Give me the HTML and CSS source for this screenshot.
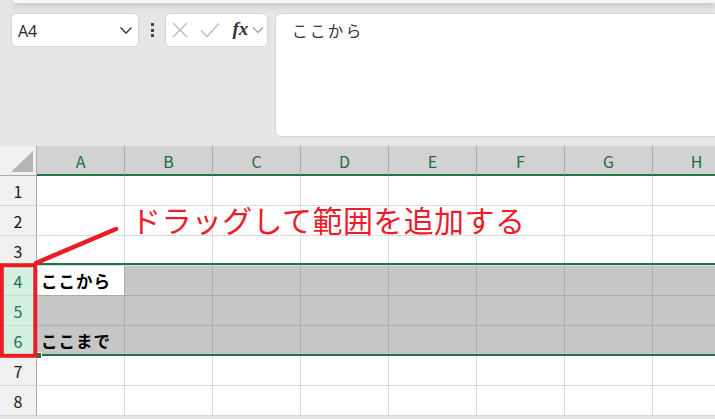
FILE: index.html
```html
<!DOCTYPE html>
<html lang="ja">
<head>
<meta charset="utf-8">
<title>Excel</title>
<link rel="stylesheet" href="styles.css">
</head>
<body>
<div class="page">
  <div class="ribbon-edge"></div>
  <div class="formula-row">
    <div class="namebox">
      <span class="name">A4</span>
      <svg class="chev" width="14" height="9" viewBox="0 0 14 9"><path d="M1.5 1.5 L7 7 L12.5 1.5" fill="none" stroke="#333" stroke-width="1.4"/></svg>
    </div>
    <div class="dots"><i></i><i></i><i></i></div>
    <div class="fbtns">
      <svg width="16" height="16" viewBox="0 0 16 16"><path d="M1 1 L15 15 M15 1 L1 15" stroke="#b8b8b8" stroke-width="1.3"/></svg>
      <svg width="20" height="16" viewBox="0 0 20 16"><path d="M1 8.5 L7 14.5 L19 1.5" fill="none" stroke="#b8b8b8" stroke-width="1.3"/></svg>
      <span class="fx">fx</span>
      <svg class="chev2" width="12" height="8" viewBox="0 0 12 8"><path d="M1 1.5 L6 6.5 L11 1.5" fill="none" stroke="#9a9a9a" stroke-width="1.2"/></svg>
    </div>
    <div class="finput">ここから</div>
  </div>

  <div class="sheet-wrap">
    <div class="sheet">
      <div class="corner"><span class="tri"></span></div>
      <div class="hd">A</div><div class="hd">B</div><div class="hd">C</div><div class="hd">D</div><div class="hd">E</div><div class="hd">F</div><div class="hd">G</div><div class="hd">H</div>

      <div class="rh">1</div><div class="c"></div><div class="c"></div><div class="c"></div><div class="c"></div><div class="c"></div><div class="c"></div><div class="c"></div><div class="c"></div>
      <div class="rh">2</div><div class="c"></div><div class="c"></div><div class="c"></div><div class="c"></div><div class="c"></div><div class="c"></div><div class="c"></div><div class="c"></div>
      <div class="rh">3</div><div class="c"></div><div class="c"></div><div class="c"></div><div class="c"></div><div class="c"></div><div class="c"></div><div class="c"></div><div class="c"></div>

      <div class="rh rsel">4</div><div class="c act">ここから</div><div class="c sel"></div><div class="c sel"></div><div class="c sel"></div><div class="c sel"></div><div class="c sel"></div><div class="c sel"></div><div class="c sel"></div>
      <div class="rh rsel">5</div><div class="c sel"></div><div class="c sel"></div><div class="c sel"></div><div class="c sel"></div><div class="c sel"></div><div class="c sel"></div><div class="c sel"></div><div class="c sel"></div>
      <div class="rh rsel">6</div><div class="c sel txt">ここまで</div><div class="c sel"></div><div class="c sel"></div><div class="c sel"></div><div class="c sel"></div><div class="c sel"></div><div class="c sel"></div><div class="c sel"></div>

      <div class="rh">7</div><div class="c"></div><div class="c"></div><div class="c"></div><div class="c"></div><div class="c"></div><div class="c"></div><div class="c"></div><div class="c"></div>
      <div class="rh">8</div><div class="c"></div><div class="c"></div><div class="c"></div><div class="c"></div><div class="c"></div><div class="c"></div><div class="c"></div><div class="c"></div>
    </div>
    <div class="selbox"><span class="handle"></span></div>
  </div>

  <div class="note">ドラッグして範囲を追加する</div>
  <svg class="marks" width="715" height="419" viewBox="0 0 715 419">
    <line x1="36" y1="263" x2="116" y2="229" stroke="#ec1c24" stroke-width="4.5" stroke-linecap="round"/>
    <rect x="1.8" y="265.2" width="33.5" height="90.6" fill="none" stroke="#ec1c24" stroke-width="4"/>
  </svg>
</div>
</body>
</html>
```
FILE: styles.css
```css
* { box-sizing: border-box; }
html, body { margin: 0; padding: 0; }
body {
  width: 715px;
  height: 419px;
  overflow: hidden;
  background: #e6e6e6;
  font-family: "Noto Sans CJK JP", "Noto Sans", sans-serif;
}
.page { position: relative; width: 715px; height: 419px; overflow: hidden; }

.ribbon-edge {
  height: 3px;
  margin-left: 13px;
  background: #f7f7f7;
  border-bottom-left-radius: 8px;
  box-shadow: 0 2px 6px rgba(0,0,0,0.28);
}

.formula-row {
  display: flex;
  align-items: flex-start;
  margin-top: 10px;
  padding-left: 11px;
}
.namebox {
  width: 131px;
  height: 34px;
  background: #fff;
  border: 1px solid #d6d6d6;
  border-radius: 5px;
  display: flex;
  align-items: center;
  justify-content: space-between;
  padding: 0 5px 0 6px;
}
.name {
  font-family: "Open Sans", "Liberation Sans", sans-serif;
  font-size: 16px;
  color: #262626;
  padding-top: 2px;
}
.chev { margin-top: 1px; }
.dots {
  width: 27px;
  height: 34px;
  display: flex;
  flex-direction: column;
  align-items: center;
  justify-content: center;
  gap: 2.5px;
}
.dots i { display: block; width: 3px; height: 3px; background: #444; }
.fbtns {
  width: 105px;
  height: 34px;
  background: #fff;
  border: 1px solid #d6d6d6;
  border-radius: 5px;
  display: flex;
  align-items: center;
  padding-left: 6px;
}
.fbtns svg:first-child { margin-right: 12px; }
.fbtns svg:nth-child(2) { margin-right: 12px; }
.fx {
  font-family: "Liberation Serif", "DejaVu Serif", serif;
  font-style: italic;
  font-weight: bold;
  font-size: 19px;
  color: #333;
  margin-top: -3px;
  margin-right: 4px;
}
.finput {
  margin-left: 7px;
  flex: 1 0 440px;
  height: 124px;
  background: #fff;
  border: 1px solid #d6d6d6;
  border-right: none;
  border-radius: 6px 0 0 6px;
  padding: 5px 0 0 16px;
  font-size: 15.5px;
  letter-spacing: 2.4px;
  color: #333;
}

.sheet-wrap {
  position: relative;
  margin-top: 9px;
  width: 715px;
  overflow: hidden;
}
.sheet {
  display: grid;
  grid-template-columns: 37px repeat(8, 88px);
  grid-template-rows: 30px repeat(8, 30px);
  width: 741px;
}
.corner {
  position: relative;
  background: #f0f0f0;
  border-right: 1px solid #ababab;
  border-bottom: 1px solid #ababab;
}
.tri {
  position: absolute;
  right: 3px;
  bottom: 3px;
  width: 0;
  height: 0;
  border-left: 22px solid transparent;
  border-bottom: 21px solid #b5b5b5;
}
.hd {
  background: #d2d2d2;
  border-right: 1px solid #ababab;
  border-bottom: 2px solid #217346;
  color: #1e6b42;
  font-size: 16px;
  display: flex;
  align-items: center;
  justify-content: center;
  padding-top: 1px;
}
.rh {
  background: #f0f0f0;
  border-right: 1px solid #ababab;
  border-bottom: 1px solid #d4d4d4;
  color: #1a1a1a;
  font-size: 16px;
  display: flex;
  align-items: center;
  justify-content: center;
}
.rh.rsel {
  background: #d3f0e0;
  color: #217346;
}
.c {
  background: #fff;
  border-right: 1px solid #dadada;
  border-bottom: 1px solid #dadada;
}
.c.sel {
  background: #c6c6c6;
  border-right-color: #ababab;
  border-bottom-color: #ababab;
}
.c.act {
  border-right-color: #ababab;
  border-bottom-color: #ababab;
}
.act, .txt {
  font-weight: bold;
  font-size: 16.5px;
  letter-spacing: 1px;
  color: #000;
  display: flex;
  align-items: center;
  padding-left: 4px;
  white-space: nowrap;
}

.selbox {
  position: absolute;
  left: 37px;
  right: 0;
  top: 117px;
  height: 93px;
  border-top: 2px solid #217346;
  border-bottom: 2px solid #217346;
}
.handle {
  position: absolute;
  left: -1px;
  bottom: -4px;
  width: 5px;
  height: 5px;
  background: #217346;
  outline: 1px solid #fff;
}

.note {
  position: absolute;
  left: 131px;
  top: 203px;
  font-size: 30px;
  line-height: 32px;
  letter-spacing: 0.4px;
  color: #ec1c2a;
  white-space: nowrap;
}
.marks {
  position: absolute;
  left: 0;
  top: 0;
}
```
